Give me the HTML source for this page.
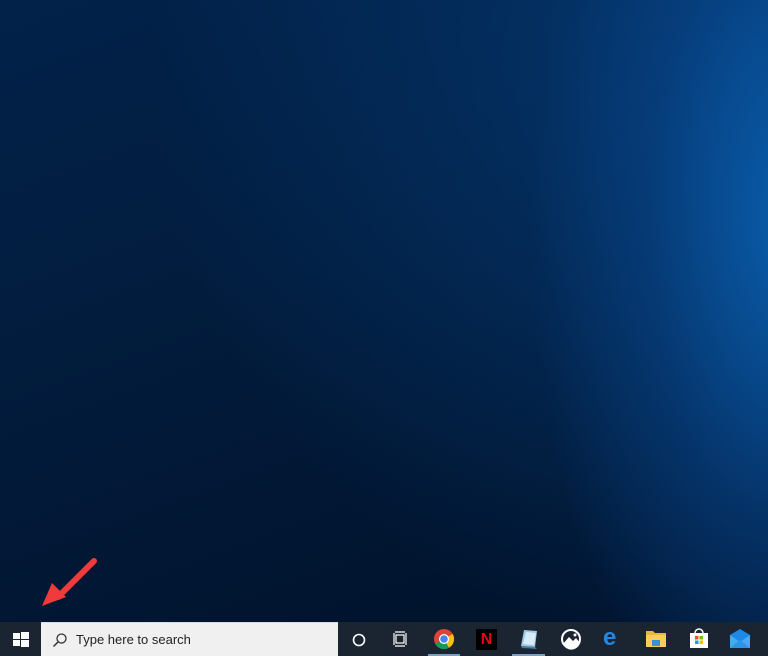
<!DOCTYPE html><html><head><style>
body{margin:0;width:768px;height:656px;overflow:hidden;position:relative;font-family:"Liberation Sans",sans-serif;
background:
radial-gradient(ellipse 260px 560px at 790px 220px,rgba(10,95,175,.95),rgba(8,70,140,.5) 55%,rgba(0,0,0,0) 100%),
radial-gradient(ellipse 650px 620px at 800px 60px,rgba(4,60,120,.9),rgba(0,0,0,0) 100%),
linear-gradient(160deg,#02224a 0%,#021c3d 40%,#011530 75%,#01112a 100%);}
.tb{position:absolute;left:0;top:622px;width:768px;height:34px;background:#1b2532;}
.s{position:absolute;left:41px;top:622px;width:297px;height:34px;background:#f0f0f0;border-top:1px solid #dcdcdc;box-sizing:border-box}
.s span{position:absolute;left:35px;top:9px;font-size:13px;color:#222}
.i{position:absolute}
</style></head><body>
<svg class="i" style="left:0;top:0" width="768" height="656">
<path d="M94 561 L58 597" stroke="#ef3b3b" stroke-width="6" stroke-linecap="round"/>
<polygon points="42,606 52,583 66,597" fill="#ef3b3b"/>
</svg>
<div class="tb"></div>
<svg class="i" style="left:13px;top:632px" width="16" height="16"><g fill="#fff"><rect x="0" y="1" width="7" height="6"/><rect x="8" y="0" width="8" height="7"/><rect x="0" y="8" width="7" height="6"/><rect x="8" y="8" width="8" height="7"/></g></svg>
<div class="s"><svg class="i" style="left:11px;top:9px" width="16" height="16"><circle cx="9.5" cy="6.5" r="4.5" stroke="#333" stroke-width="1.3" fill="none"/><path d="M6 10 L1.5 14.5" stroke="#333" stroke-width="1.5"/></svg><span>Type here to search</span></div>
<svg class="i" style="left:351px;top:632px" width="16" height="16"><circle cx="8" cy="8" r="5.5" stroke="#fff" stroke-width="1.6" fill="none"/></svg>
<svg class="i" style="left:392px;top:631px" width="16" height="16"><g fill="none" stroke="#fff" stroke-width="1.2"><rect x="4" y="4" width="8" height="8"/><path d="M2 2v12M14 2v12M3 1h10M3 15h10"/></g></svg>
<svg class="i" style="left:433px;top:628px" width="22" height="22"><circle cx="11" cy="11" r="10" fill="#db4437"/><path d="M11 11 L2.3 16 A10 10 0 0 0 16 19.7Z" fill="#0f9d58"/><path d="M11 11 L16 19.7 A10 10 0 0 0 19.7 6Z" fill="#f4c20d"/><circle cx="11" cy="11" r="5" fill="#fff"/><circle cx="11" cy="11" r="3.8" fill="#4285f4"/></svg>
<div class="i" style="left:476px;top:629px;width:21px;height:21px;background:#000;color:#e50914;font:bold 16px 'Liberation Sans';text-align:center;line-height:21px">N</div>
<svg class="i" style="left:518px;top:628px" width="22" height="22"><path d="M6 2 L19 3 L17 19 L3 18Z" fill="#9cc9e6"/><path d="M8 4 L18 5 L16 17 L5 16Z" fill="#d8ecf8"/><path d="M3 18 L17 19 L19 21 L4 20Z" fill="#4a7aa0"/></svg>
<svg class="i" style="left:560px;top:628px" width="22" height="22"><circle cx="11" cy="11" r="9" fill="none" stroke="#fff" stroke-width="2"/><path d="M3 16 L9 9 L13 13 L16 10 L20 15 A9 9 0 0 1 3 16Z" fill="#fff"/><circle cx="15" cy="7" r="1.5" fill="#fff"/></svg>
<div class="i" style="left:603px;top:625px;color:#1e88e5;font:bold 24px 'Liberation Sans';line-height:26px">e</div>
<svg class="i" style="left:645px;top:629px" width="22" height="20"><path d="M1 2h7l2 2h11v14H1Z" fill="#e8b840"/><rect x="1" y="6" width="20" height="12" fill="#f7ce5a"/><rect x="7" y="11" width="8" height="6" fill="#3a8fd8"/></svg>
<svg class="i" style="left:688px;top:627px" width="22" height="22"><path d="M7 6 A4 4 0 0 1 15 6" fill="none" stroke="#fff" stroke-width="1.5"/><rect x="2" y="6" width="18" height="15" fill="#fff"/><rect x="7" y="9" width="3.5" height="3.5" fill="#f25022"/><rect x="11.5" y="9" width="3.5" height="3.5" fill="#7fba00"/><rect x="7" y="13.5" width="3.5" height="3.5" fill="#00a4ef"/><rect x="11.5" y="13.5" width="3.5" height="3.5" fill="#ffb900"/></svg>
<svg class="i" style="left:729px;top:629px" width="22" height="20"><path d="M1 6 L11 0 L21 6 V19 H1Z" fill="#1e88e5"/><path d="M1 6 L11 13 L21 6 V19 H1Z" fill="#48a8f0"/><path d="M1 19 L11 11 L21 19Z" fill="#2b95e8"/></svg>
<div class="i" style="left:428px;top:654px;width:32px;height:2px;background:#7b9fc4"></div>
<div class="i" style="left:512px;top:654px;width:33px;height:2px;background:#7b9fc4"></div>
</body></html>
